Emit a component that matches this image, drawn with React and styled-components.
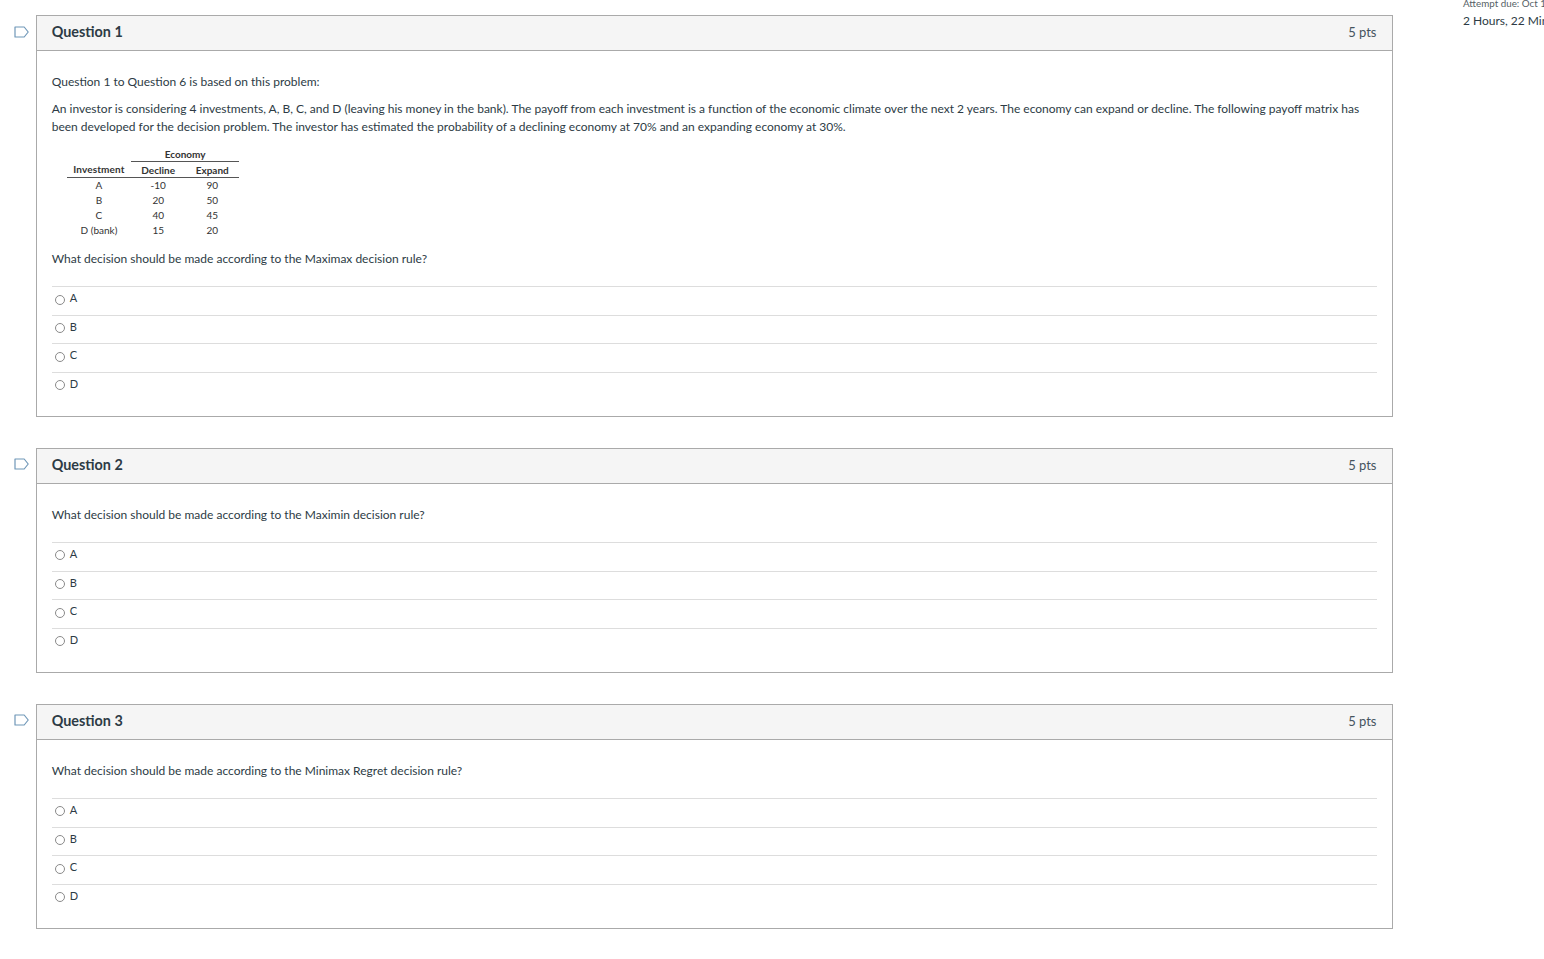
import React from 'react';
import styled, { createGlobalStyle } from 'styled-components';

const GlobalStyle = createGlobalStyle`
  html, body {
    margin: 0;
    padding: 0;
    background: #fff;
    overflow: hidden;
  }
  body {
    font-family: Lato, "Liberation Sans", sans-serif;
    color: #2d3b45;
  }
`;

const Page = styled.div`
  display: flex;
  width: 1544px;
  height: 959px;
  overflow: hidden;
`;

const Main = styled.main`
  width: 1393px;
  flex: none;
  padding: 15px 0 0 14px;
  box-sizing: border-box;
  display: flex;
  flex-direction: column;
  gap: 31px;
`;

const QuestionRow = styled.div`
  display: flex;
  align-items: flex-start;
`;

const FlagButton = styled.div`
  width: 22px;
  flex: none;
  padding-top: 10.5px;
  line-height: 0;
`;

const Card = styled.section`
  flex: 1;
  border: 1px solid #aaa;
  box-sizing: border-box;
`;

const CardHeader = styled.header`
  display: flex;
  justify-content: space-between;
  align-items: center;
  height: 35px;
  padding: 0 15.5px 0 14.7px;
  box-sizing: border-box;
  background: #f5f5f5;
  border-bottom: 1px solid #aaa;
`;

const QuestionName = styled.h2`
  margin: 0 0 2.5px;
  font-size: 14.4px;
  font-weight: 700;
  color: #2d3b45;
`;

const Points = styled.span`
  margin-bottom: 2px;
  font-size: 13px;
  font-weight: 400;
  color: #45535e;
`;

const CardBody = styled.div`
  padding: 22px 15.5px 15.32px 14.7px;
`;

const Paragraph = styled.p`
  margin: 0 0 10px;
  font-size: 12px;
  line-height: 18px;
  color: #2d3b45;

  &:first-child {
    margin-bottom: 9px;
  }
`;

const Prompt = styled.p`
  margin: 0 0 18px;
  font-size: 12px;
  line-height: 18px;
  color: #2d3b45;
`;

const Payoff = styled.table`
  margin: 0 0 12px 15px;
  border-collapse: collapse;
  font-family: Lato, "Noto Sans", sans-serif;
  font-size: 10px;
  color: #333;
  text-align: center;

  th {
    padding: 0;
    height: 15px;
    font-weight: 700;
  }
  td {
    padding: 0 0 2px;
    height: 13px;
    line-height: 12px;
    font-weight: 400;
  }
`;

const EconomyCell = styled.th`
  border-bottom: 1px solid #555;
`;

const LabelHead = styled.th`
  width: 64.5px;
  border-bottom: 1px solid #555;
  letter-spacing: 0.15px;

  && {
    height: 14.5px;
  }
`;

const ValueHead = styled.th`
  width: 54px;
  border-bottom: 1px solid #555;
`;

const Spacer = styled.th`
  width: 64.5px;
`;

const AnswerList = styled.div`
  display: flex;
  flex-direction: column;
`;

const Answer = styled.label`
  display: flex;
  align-items: flex-start;
  height: 28.67px;
  box-sizing: border-box;
  border-top: 1px solid #ddd;
  padding: 4px 0 0 3px;
  font-size: 11px;
  line-height: 14px;
  color: #2d3b45;
`;

const Radio = styled.span`
  width: 8px;
  height: 8px;
  margin: 3.5px 5px 0 0;
  border: 1px solid #8a8a8a;
  border-radius: 50%;
  background: #fff;
  flex: none;
`;

const Aside = styled.aside`
  margin-left: 70px;
  white-space: nowrap;
`;

const Due = styled.div`
  margin-top: -4px;
  font-size: 9.8px;
  line-height: 14px;
  color: #565f66;
`;

const TimeLeft = styled.div`
  margin-top: 2px;
  font-size: 12px;
  line-height: 18px;
  color: #2d3b45;
`;

const Flag = () => (
  <svg width="16" height="12" viewBox="0 0 16 12" fill="none">
    <path d="M1 1 H10.2 L14.2 6 L10.2 11 H1 Z" fill="#fff" stroke="#6f97b8" strokeWidth="1.2" strokeLinejoin="round" />
  </svg>
);

const rows = [
  ['A', '-10', '90'],
  ['B', '20', '50'],
  ['C', '40', '45'],
  ['D (bank)', '15', '20'],
];

const Answers = () => (
  <AnswerList>
    {['A', 'B', 'C', 'D'].map((a) => (
      <Answer key={a}>
        <Radio />
        {a}
      </Answer>
    ))}
  </AnswerList>
);

const Question = ({ n, children }) => (
  <QuestionRow>
    <FlagButton><Flag /></FlagButton>
    <Card>
      <CardHeader>
        <QuestionName>Question {n}</QuestionName>
        <Points>5 pts</Points>
      </CardHeader>
      <CardBody>
        {children}
        <Answers />
      </CardBody>
    </Card>
  </QuestionRow>
);

export default function App() {
  return (
    <Page>
      <GlobalStyle />
      <Main>
        <Question n={1}>
          <Paragraph>Question 1 to Question 6 is based on this problem:</Paragraph>
          <Paragraph>
            An investor is considering 4 investments, A, B, C, and D (leaving his money in the bank). The payoff from each investment is a function of the economic climate over the next 2 years. The economy can expand or decline. The following payoff matrix has been developed for the decision problem. The investor has estimated the probability of a declining economy at 70% and an expanding economy at 30%.
          </Paragraph>
          <Payoff>
            <thead>
              <tr>
                <Spacer />
                <EconomyCell colSpan={2}>Economy</EconomyCell>
              </tr>
              <tr>
                <LabelHead>Investment</LabelHead>
                <ValueHead>Decline</ValueHead>
                <ValueHead>Expand</ValueHead>
              </tr>
            </thead>
            <tbody>
              {rows.map((r) => (
                <tr key={r[0]}>
                  {r.map((c, i) => <td key={i}>{c}</td>)}
                </tr>
              ))}
            </tbody>
          </Payoff>
          <Prompt>What decision should be made according to the Maximax decision rule?</Prompt>
        </Question>
        <Question n={2}>
          <Prompt>What decision should be made according to the Maximin decision rule?</Prompt>
        </Question>
        <Question n={3}>
          <Prompt>What decision should be made according to the Minimax Regret decision rule?</Prompt>
        </Question>
      </Main>
      <Aside>
        <Due>Attempt due: Oct 10 at 11:59pm</Due>
        <TimeLeft>2 Hours, 22 Minutes</TimeLeft>
      </Aside>
    </Page>
  );
}
